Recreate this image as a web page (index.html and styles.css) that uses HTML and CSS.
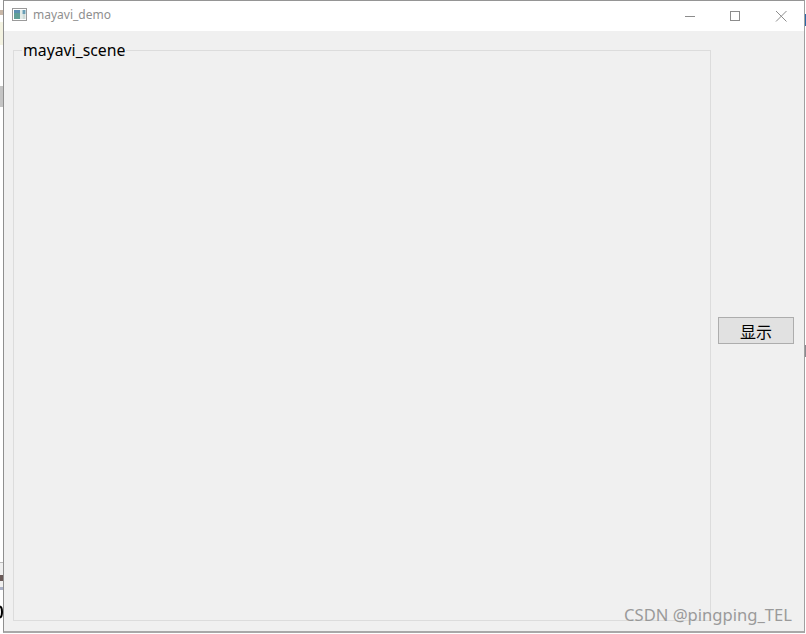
FILE: index.html
```
<!DOCTYPE html>
<html lang="en">
<head>
<meta charset="utf-8">
<title>mayavi_demo</title>
<link rel="stylesheet" href="styles.css">
</head>
<body>
<div class="desktop">
  <div class="peek peek-top"></div>
  <div class="peek peek-dot"></div>
  <div class="peek peek-grey"></div>
  <div class="peek peek-tab"></div>
  <div class="peek peek-mark"></div>
  <div class="peek peek-tabline"></div>
  <svg class="peek peek-glyph" width="3" height="14" viewBox="0 0 3 14"><path d="M0 1.500C1.500 2 2 4.500 2 7S1.500 12 0 12.500" stroke="#000" stroke-width="2" fill="none"/></svg>
  <div class="peek peek-blue"></div>
  <div class="peek peek-mid"></div>
  <main class="window">
    <header class="titlebar">
      <svg class="app-icon" width="16" height="16" viewBox="0 0 16 16">
        <rect x="0.5" y="1.5" width="14" height="12" fill="#fff" stroke="#9a9a9a"/>
        <rect x="2" y="3" width="6" height="9" fill="#5f9e96"/>
        <rect x="2" y="3" width="6" height="3" fill="#5b8fb0"/>
        <rect x="8" y="3" width="2.5" height="9" fill="#e4ece8"/>
        <rect x="10.5" y="3" width="3" height="4" fill="#6a9fb5"/>
        <rect x="10.5" y="7" width="3" height="5" fill="#cfdcd8"/>
      </svg>
      <span class="title">mayavi_demo</span>
      <div class="controls">
        <svg class="ctl" width="46" height="30" viewBox="0 0 46 30"><path d="M19 15.500H29" stroke="#8c8c8c" fill="none"/></svg>
        <svg class="ctl" width="46" height="30" viewBox="0 0 46 30"><rect x="18.500" y="10.500" width="9" height="9" stroke="#8c8c8c" fill="none"/></svg>
        <svg class="ctl" width="46" height="30" viewBox="0 0 46 30"><path d="M18 10L28.500 20.500M28.500 10L18 20.500" stroke="#8c8c8c" fill="none"/></svg>
      </div>
    </header>
    <div class="client">
      <fieldset class="group">
        <legend class="legend">mayavi_scene</legend>
      </fieldset>
      <div class="side">
        <button class="btn" type="button">显示</button>
      </div>
    </div>
    <div class="watermark">CSDN @pingping_TEL</div>
  </main>
</div>
</body>
</html>
```
FILE: styles.css
```
html, body {
  margin: 0;
  padding: 0;
  background: #fff;
}
.desktop {
  position: relative;
  width: 806px;
  height: 634px;
  overflow: hidden;
  background: #fff;
  font-family: "Liberation Sans", Arial, sans-serif;
}
.peek { position: absolute; }
.peek-top { left: 0; top: 22px; width: 3px; height: 23px; background: #f4f3e2; }
.peek-dot { left: 0; top: 10px; width: 3px; height: 5px; background: #c9b8a8; }
.peek-grey { left: 0; top: 86px; width: 3px; height: 21px; background: #c4c4c4; }
.peek-tab { left: 0; top: 562px; width: 3px; height: 26px; background: #f0f0f0; border-top: 1px solid #bbb; box-sizing: border-box; }
.peek-mark { left: 0; top: 575px; width: 3px; height: 6px; background: #6a5a58; }
.peek-tabline { left: 0; top: 587px; width: 3px; height: 3px; background: #a9afc4; }
.peek-glyph { left: 0; top: 605px; }
.peek-blue { left: 805px; top: 14px; width: 1px; height: 12px; background: #2a6aa8; }
.peek-mid { left: 805px; top: 345px; width: 1px; height: 12px; background: #8a8a90; }
.window {
  position: absolute;
  left: 3px;
  top: 0;
  width: 802px;
  height: 633px;
  box-sizing: border-box;
  border-style: solid;
  border-width: 1px 1px 2px 1px;
  border-color: #959595 #a0a0a0 #a8a8a8 #8f8f8f;
  background: #f0f0f0;
  display: flex;
  flex-direction: column;
}
.titlebar {
  height: 30px;
  flex: none;
  background: #fff;
  display: flex;
  align-items: center;
  padding-left: 8px;
}
.app-icon { flex: none; margin-right: 5px; margin-top: -2px; }
.title {
  font-family: "Noto Sans", sans-serif;
  font-size: 12px;
  line-height: 16px;
  margin-top: -2px;
  color: #8f8f8f;
}
.controls { margin-left: auto; display: flex; }
.ctl { display: block; }
.client {
  flex: 1;
  display: flex;
  padding: 10px 10px 10px 9px;
  min-height: 0;
}
.group {
  width: 698px;
  box-sizing: border-box;
  margin: 0;
  padding: 0;
  border: 1px solid #dcdcdc;
  min-width: 0;
}
.legend {
  margin-left: 8px;
  padding: 0 1px;
  font-family: "Noto Sans", sans-serif;
  font-size: 15.800px;
  line-height: 18px;
  color: #000;
}
.side {
  flex: 1;
  display: flex;
  align-items: center;
  padding: 0 0 0 7px;
}
.btn {
  width: 76px;
  height: 27px;
  margin-bottom: 1px;
  box-sizing: border-box;
  border: 1px solid #adadad;
  background: #e1e1e1;
  font-family: "Noto Sans CJK SC", sans-serif;
  font-size: 16px;
  color: #000;
  padding: 0;
}
.watermark {
  position: absolute;
  right: 12px;
  top: 604px;
  font-family: "Noto Sans", sans-serif;
  font-size: 16.600px;
  line-height: 20px;
  color: #8c8c8c;
  opacity: .85;
}
```
